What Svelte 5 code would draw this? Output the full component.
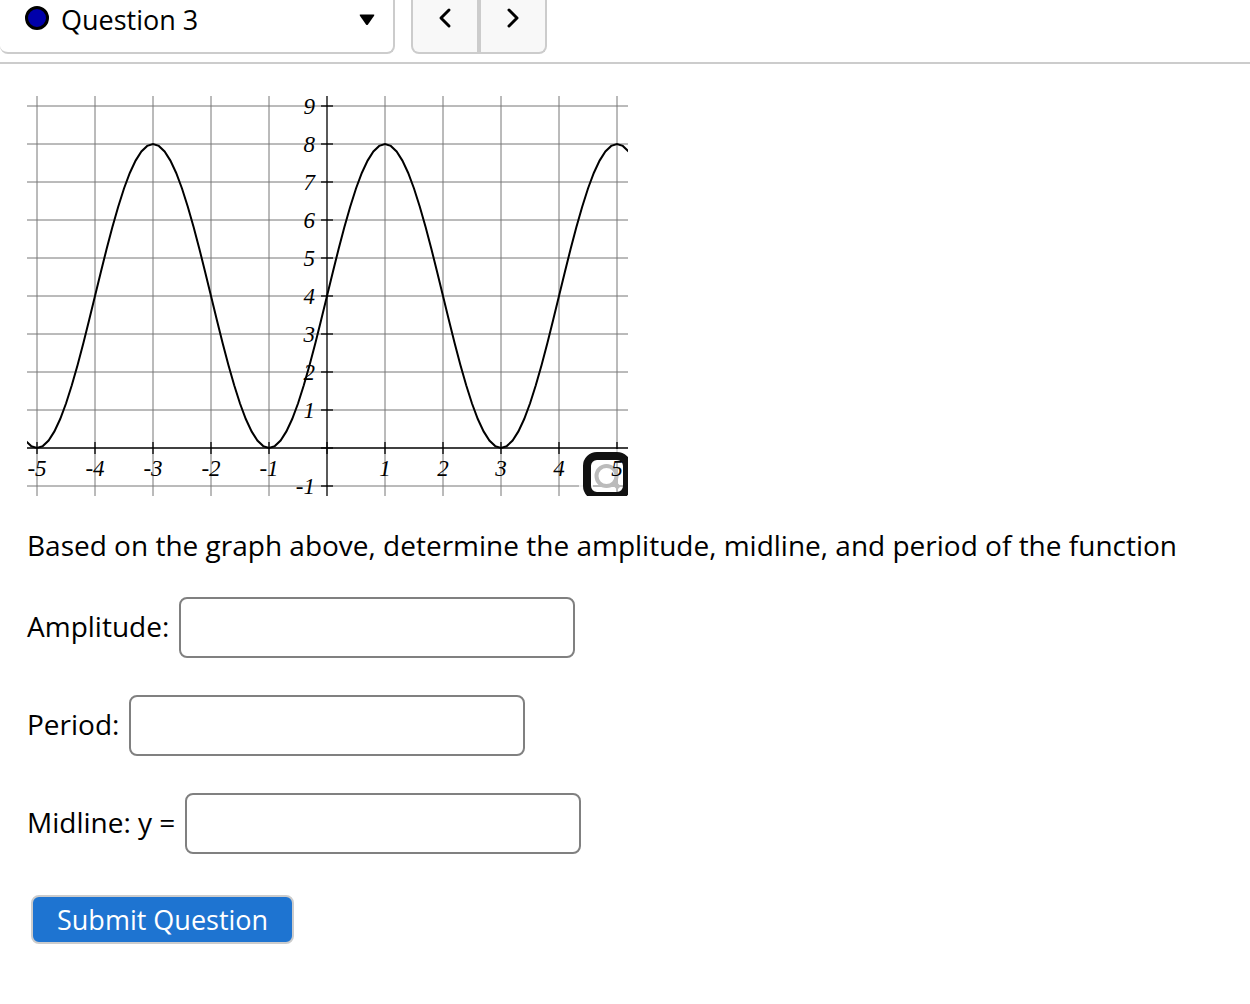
<script lang="ts">
	const width = 601;
	const height = 400;
	const originX = 300;
	const originY = 352;
	const unitX = 58;
	const unitY = 38;

	const xTicks = [-5, -4, -3, -2, -1, 1, 2, 3, 4, 5];
	const yTicks = [-1, 1, 2, 3, 4, 5, 6, 7, 8, 9];

	const fields = [
		{ id: 'amplitude', label: 'Amplitude:' },
		{ id: 'period', label: 'Period:' },
		{ id: 'midline', label: 'Midline: y =' }
	];

	let question = $state('3');
	let answers: Record<string, string> = $state({
		amplitude: '',
		period: '',
		midline: ''
	});

	const toX = (x: number) => originX + x * unitX;
	const toY = (y: number) => originY - y * unitY;

	// y = 4 sin(pi x / 2) + 4
	const curve = Array.from({ length: 106 }, (_, i) => {
		const x = -5.2 + i * 0.1;
		const y = 4 * Math.sin((Math.PI * x) / 2) + 4;
		return `${toX(x).toFixed(1)},${toY(y).toFixed(1)}`;
	}).join(' ');
</script>

<header class="question-nav">
	<div class="question-picker">
		<span class="status-dot"></span>
		<select bind:value={question} aria-label="Question">
			<option value="3">Question 3</option>
		</select>
		<svg class="caret" viewBox="0 0 16 12" aria-hidden="true">
			<path d="M1.500 0.500h13q1.500 0 .6 1.300L9 10.500q-1 1.200-2 0L.9 1.800Q0 .5 1.500 .5z" />
		</svg>
	</div>

	<div class="step-buttons">
		<button type="button" aria-label="Previous question">
			<svg viewBox="0 0 24 24"><polyline points="16 4 8 12 16 20" /></svg>
		</button>
		<button type="button" aria-label="Next question">
			<svg viewBox="0 0 24 24"><polyline points="8 4 16 12 8 20" /></svg>
		</button>
	</div>
</header>

<main class="question">
	<svg
		class="graph"
		{width}
		{height}
		viewBox="0 0 {width} {height}"
		role="img"
		aria-label="Graph of a sine wave"
	>
		<clipPath id="plot-area">
			<rect {width} {height} />
		</clipPath>

		<g class="grid">
			{#each xTicks as x (x)}
				<line x1={toX(x)} x2={toX(x)} y1="0" y2={height} />
			{/each}
			{#each yTicks as y (y)}
				<line x1="0" x2={width} y1={toY(y)} y2={toY(y)} />
			{/each}
		</g>

		<g class="axes">
			<line x1="0" x2={width} y1={originY} y2={originY} />
			<line x1={originX} x2={originX} y1="0" y2={height} />
			<line x1={originX} x2={originX} y1={originY - 6} y2={originY + 6} />
			<line x1={originX - 6} x2={originX + 6} y1={originY} y2={originY} />
			{#each xTicks as x (x)}
				<line x1={toX(x)} x2={toX(x)} y1={originY - 6} y2={originY + 6} />
			{/each}
			{#each yTicks as y (y)}
				<line x1={originX - 6} x2={originX + 6} y1={toY(y)} y2={toY(y)} />
			{/each}
		</g>

		<!-- enlarge badge, sits below the labels -->
		<g clip-path="url(#plot-area)">
			<path class="halo" d="M552 400V369Q552 353 568 353H601V366H570Q566 366 566 370V400Z" />
			<rect class="frame" x="560" y="360" width="40" height="40" rx="10" />
			<circle class="lens" cx="579.500" cy="380" r="10" />
			<path class="handle" d="M587 387L592 392" />
		</g>

		<g class="tick-labels">
			{#each xTicks as x (x)}
				<text x={toX(x)} y={originY + 28} text-anchor="middle">{x}</text>
			{/each}
			{#each yTicks as y (y)}
				<text x={originX - 12} y={toY(y) + 8} text-anchor="end">{y}</text>
			{/each}
		</g>

		<g clip-path="url(#plot-area)">
			<polyline class="curve" points={curve} />
		</g>
	</svg>

	<p class="prompt">
		Based on the graph above, determine the amplitude, midline, and period of the function
	</p>

	<form onsubmit={(e) => e.preventDefault()}>
		{#each fields as field (field.id)}
			<div class="field">
				<label for={field.id}>{field.label}</label>
				<input id={field.id} type="text" autocomplete="off" bind:value={answers[field.id]} />
			</div>
		{/each}

		<button type="submit" class="submit">Submit Question</button>
	</form>
</main>

<style>
	:global(body) {
		background: #fff;
		color: #000;
		font-family: 'Trebuchet MS', 'Open Sans', sans-serif;
		font-size: 28px;
		line-height: 40px;
	}

	select,
	input,
	button {
		box-sizing: border-box;
		margin: 0;
		font: inherit;
		font-size: 27px;
		color: inherit;
	}

	/* -- Navigation -- */
	.question-nav {
		display: flex;
		gap: 16px;
		height: 54px;
		padding-bottom: 8px;
		border-bottom: 2px solid #ccc;
	}

	.question-picker {
		position: relative;
		display: flex;
		box-sizing: border-box;
		width: 395px;
		border: 2px solid #ccc;
		border-width: 0 2px 2px 0;
		border-radius: 0 0 8px 8px;
	}

	.status-dot {
		box-sizing: border-box;
		width: 24px;
		height: 24px;
		margin: 6px 12px 0 25px;
		border: 3px solid #000;
		border-radius: 50%;
		background: #00a;
	}

	.question-picker select {
		flex: 1;
		height: 40px;
		padding: 0;
		border: 0;
		background: transparent;
		appearance: none;
	}

	.caret {
		position: absolute;
		top: 14px;
		right: 18px;
		width: 16px;
		height: 12px;
		pointer-events: none;
	}

	.step-buttons {
		display: flex;
	}

	.step-buttons button {
		display: flex;
		justify-content: center;
		width: 68px;
		padding: 6px 0 0;
		border: 2px solid #ccc;
		border-top: 0;
		border-radius: 0 0 0 8px;
		background: #f8f8f8;
	}

	.step-buttons button + button {
		border-radius: 0 0 8px 0;
	}

	.step-buttons svg {
		width: 24px;
		height: 24px;
		fill: none;
		stroke: #000;
		stroke-width: 3;
		stroke-linecap: round;
		stroke-linejoin: round;
	}

	/* -- Graph -- */
	.question {
		padding: 32px 27px;
	}

	.graph {
		display: block;
		overflow: visible;
	}

	.grid line {
		stroke: #777;
		stroke-width: 1;
	}

	.axes line {
		stroke: #000;
		stroke-width: 1.3;
	}

	.tick-labels text {
		font-family: 'Liberation Serif', serif;
		font-size: 23px;
		font-style: italic;
	}

	.curve {
		fill: none;
		stroke: #000;
		stroke-width: 2;
	}

	.halo {
		fill: #fff;
		opacity: 0.8;
	}

	.frame {
		fill: none;
		stroke: #111;
		stroke-width: 8;
	}

	.lens {
		fill: none;
		stroke: #bbb;
		stroke-width: 4;
	}

	.handle {
		stroke: #bbb;
		stroke-width: 5;
	}

	/* -- Answers -- */
	.prompt {
		margin: 29px 0 32px;
	}

	.field {
		display: flex;
		align-items: center;
		gap: 10px;
		margin-bottom: 37px;
	}

	.field label {
		padding-bottom: 4px;
	}

	.field input {
		width: 396px;
		height: 61px;
		padding: 8px 12px;
		border: 2px solid #808080;
		border-radius: 8px;
		background: #fff;
	}

	.submit {
		height: 49px;
		margin: 4px;
		padding: 0 24px;
		border: 2px solid #ccc;
		border-radius: 8px;
		background: #1e74d1;
		color: #fff;
	}
</style>
